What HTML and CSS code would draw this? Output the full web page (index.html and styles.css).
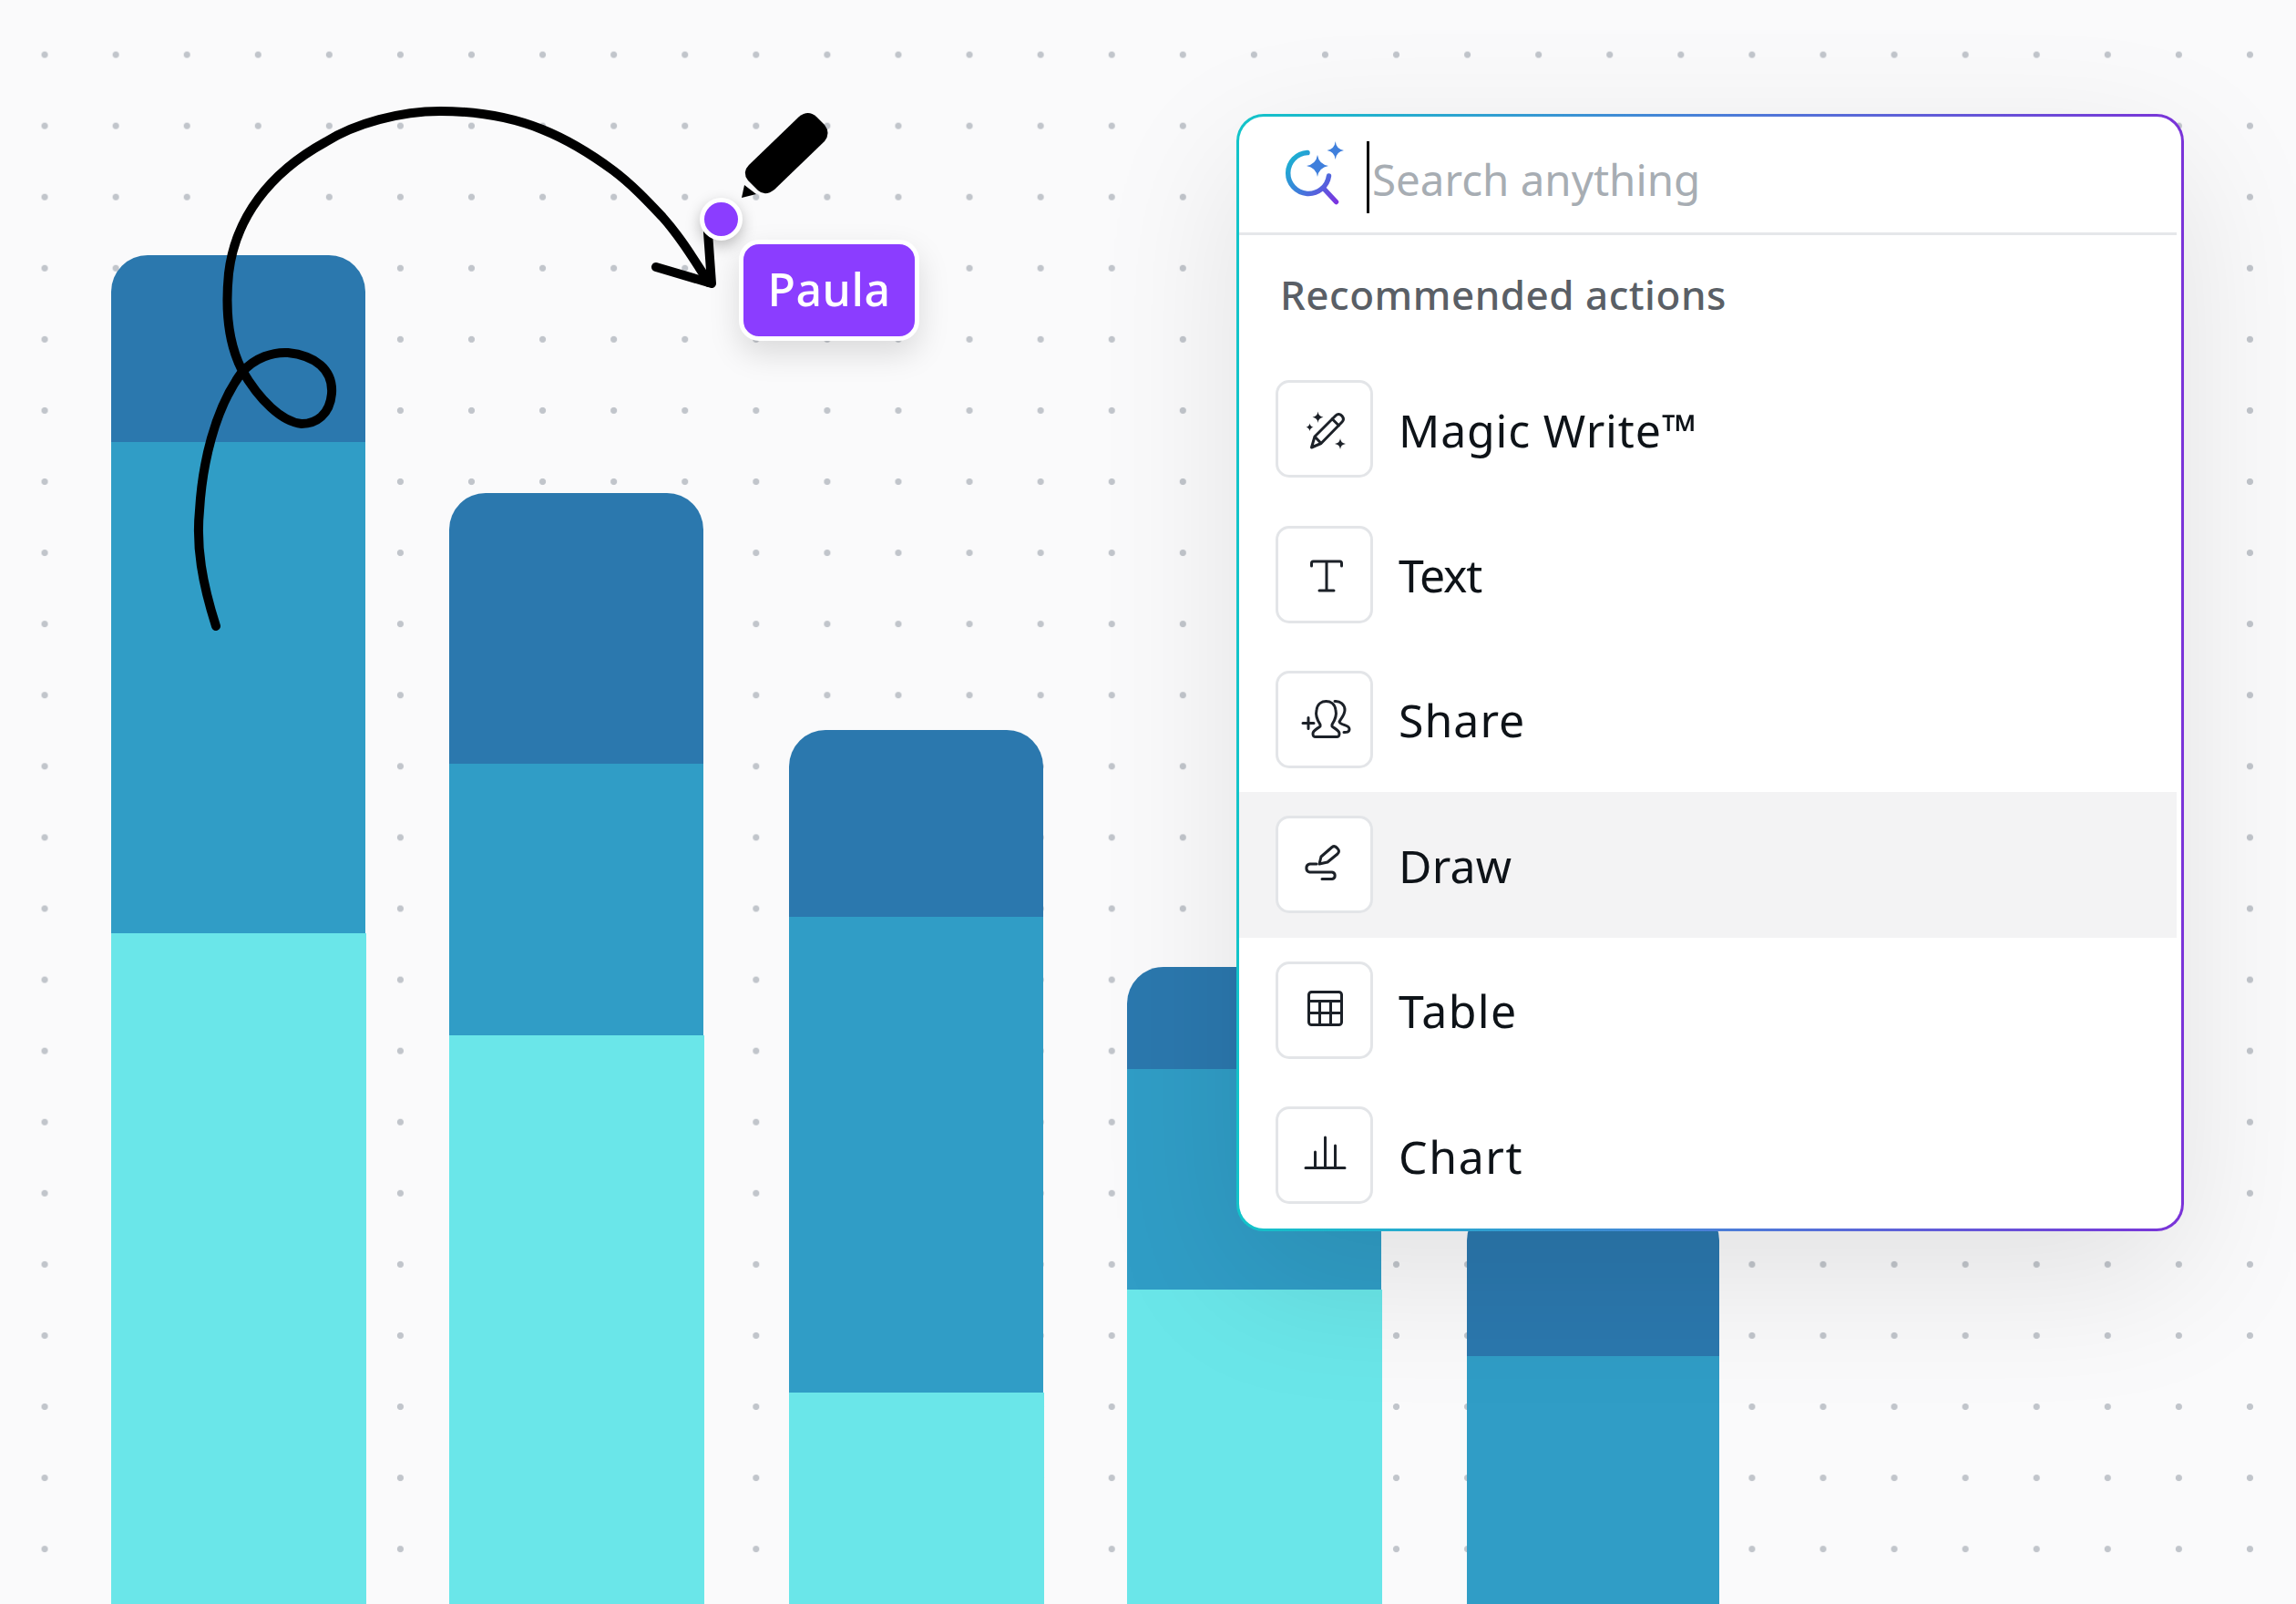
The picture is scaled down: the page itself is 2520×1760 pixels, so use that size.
FILE: index.html
```html
<!DOCTYPE html>
<html lang="en">
<head>
    <meta charset="UTF-8">
    <title>Recommended actions</title>
    <link rel="stylesheet" href="styles.css">
</head>
<body>
    <div class="chart">
        <div class="bar"><div class="seg dark h205"></div><div class="seg mid h539"></div><div class="seg light h736"></div></div>
        <div class="bar"><div class="seg dark h297"></div><div class="seg mid h298"></div><div class="seg light h624"></div></div>
        <div class="bar bar-shift"><div class="seg dark h205b"></div><div class="seg mid h522"></div><div class="seg light h232"></div></div>
        <div class="bar"><div class="seg dark h112"></div><div class="seg mid h242"></div><div class="seg light h345"></div></div>
        <div class="bar bar-shift bar-last"><div class="seg dark h167"></div><div class="seg mid h272"></div></div>
    </div>

    <svg class="scribble" viewBox="0 0 1000 720" width="1000" height="720">
        <path class="scribble-line" d="M237 687 C222 640 215 600 219 560 C222 510 235 450 265 409 C280 392 300 386 316 387 C345 390 366 405 364 432 C362 455 347 465 331 465 C310 463 285 440 265 405 C250 375 247 340 251 300 C258 240 295 190 357 156 C390 135 440 122 483 122 C520 122 560 128 595 142 C625 154 650 170 673 187 C693 202 710 220 727 238 C745 258 760 282 778 310"/>
        <path class="scribble-line" d="M720 293 L781 311 L777 255"/>
        <path class="pen-body" d="M822 181 L877 128 Q887 120 896 128 L905 137 Q912 146 905 155 L850 208 Q840 216 832 209 L821 198 Q814 189 822 181 Z"/>
        <path class="pen-body" d="M817 203 L814 217 L830 213 Z"/>
    </svg>

    <div class="cursor-dot"></div>
    <div class="name-tag">Paula</div>

    <div class="panel">
        <div class="search">
            <svg class="search-icon" viewBox="0 0 70 72" width="70" height="72">
                <defs>
                    <linearGradient id="lens" x1="0" y1="0" x2="1" y2="1">
                        <stop offset="0" stop-color="#16b9d0"/>
                        <stop offset="0.5" stop-color="#3d7edb"/>
                        <stop offset="1" stop-color="#7b35e0"/>
                    </linearGradient>
                </defs>
                <path class="lens-line" stroke="url(#lens)" d="M28 14.5 A22.5 22.5 0 1 0 51.5 40 M46 54 L59.5 68.5"/>
                <path class="spark" d="M39 17 Q40.5 27 51 29 Q40.5 31 39 41 Q37.5 31 27 29 Q37.5 27 39 17 Z"/>
                <path class="spark" d="M58.7 2 Q59.5 10.5 68 12 Q59.5 13.5 58.7 22 Q57.9 13.5 49.5 12 Q57.9 10.5 58.7 2 Z"/>
            </svg>
            <span class="caret"></span>
            <span class="placeholder">Search anything</span>
        </div>

        <h2 class="section-title">Recommended actions</h2>

        <div class="row">
            <div class="icon-box">
                <svg viewBox="0 0 60 60" width="60" height="60">
                    <path d="M15.5 50 L19 38 L42 15 C44 13 47 13 49 15.5 C51 18 51 20 49 22 L26 45.5 Z M38 18.5 L45.5 26 M19 38 L26 45.5"/>
                    <path class="icon-fill" d="M22.5 10.5 Q23 16 28.5 16.7 Q23 17.4 22.5 23 Q22 17.4 16.5 16.7 Q22 16 22.5 10.5 Z M13.5 23.5 Q14 27 17.5 27.7 Q14 28.4 13.5 32 Q13 28.4 9.5 27.7 Q13 27 13.5 23.5 Z M47 40 Q47.5 45.3 53 46 Q47.5 46.7 47 52 Q46.5 46.7 41 46 Q46.5 45.3 47 40 Z"/>
                </svg>
            </div>
            <span class="row-label label-magic">Magic Write™</span>
        </div>
        <div class="row">
            <div class="icon-box">
                <svg viewBox="0 0 60 60" width="60" height="60">
                    <path d="M15.5 21 V18 A2 2 0 0 1 17.5 16 H46.5 A2 2 0 0 1 48.5 18 V21 M32 16 V48 M24 48 H40"/>
                </svg>
            </div>
            <span class="row-label label-text">Text</span>
        </div>
        <div class="row">
            <div class="icon-box">
                <svg viewBox="0 0 60 60" width="60" height="60">
                    <path d="M6 34.5 H18 M12 28.5 V40.5"/>
                    <path d="M25 36 C21 30 20 24 21 20 C22 13 27 10.5 31.5 10.5 C36 10.5 41 13 42 20 C43 24 42 30 38 36 L38 38 C40 40 46 42 46 46 C46 49 45 49.5 43 49.5 H20 C18 49.5 17 49 17 46 C17 42 23 40 25 38 Z"/>
                    <path d="M41 10.5 C47 10 52 14 52 20 C52 26 47 30 46 33 C47 37 57 36 57 41 C57 45 53 44.5 51 44.5"/>
                </svg>
            </div>
            <span class="row-label label-share">Share</span>
        </div>
        <div class="row row-active">
            <div class="icon-box">
                <svg viewBox="0 0 60 60" width="60" height="60">
                    <path d="M24 29 L26 21 L38 10.5 C40 9 42 9.5 44 12 C46 14 46 16 44 18 L33 27 Z"/>
                    <path d="M21 29 H13.5 A4.6 4.6 0 0 0 13.5 38 H38 A3.8 3.8 0 0 1 38 45.5 H27"/>
                </svg>
            </div>
            <span class="row-label label-draw">Draw</span>
        </div>
        <div class="row">
            <div class="icon-box">
                <svg viewBox="0 0 60 60" width="60" height="60">
                    <rect x="12.5" y="10.5" width="36" height="36" rx="3"/>
                    <path d="M12.5 20.5 H48.5 M12.5 33.5 H48.5 M24.5 20.5 V46.5 M36.5 20.5 V46.5"/>
                </svg>
            </div>
            <span class="row-label label-table">Table</span>
        </div>
        <div class="row">
            <div class="icon-box">
                <svg viewBox="0 0 60 60" width="60" height="60">
                    <path d="M9 43.5 H52 M19.5 43.5 V26 M30.5 43.5 V10 M41.5 43.5 V19"/>
                </svg>
            </div>
            <span class="row-label label-chart">Chart</span>
        </div>
    </div>
</body>
</html>
```

FILE: styles.css
```css
html, body {
    margin: 0;
    height: 100%;
}
body {
    width: 2520px;
    height: 1760px;
    overflow: hidden;
    position: relative;
    font-family: "Noto Sans", "Open Sans", sans-serif;
    background-color: #fafafb;
    background-image: radial-gradient(circle at center, #c1c5cb 3.2px, transparent 4px);
    background-size: 78.08px 78.08px;
    background-position: 10px 21px;
}

/* bars run off the bottom of the page */
.chart {
    display: flex;
    align-items: flex-end;
    gap: 91px;
    height: 1760px;
    padding-left: 122px;
    box-sizing: border-box;
}
.bar {
    width: 280px;
    display: flex;
    flex-direction: column;
}
.bar-shift { margin-left: 2px; }
.bar-last { width: 278px; }
.seg { width: calc(100% - 1px); }
.dark {
    background: #2b78ae;
    border-radius: 40px 40px 0 0;
}
.mid { background: #309dc6; }
.light {
    width: 100%;
    background: #6ae6e9;
}
.h205 { height: 205px; }
.h539 { height: 539px; }
.h736 { height: 736px; }
.h297 { height: 297px; }
.h298 { height: 298px; }
.h624 { height: 624px; }
.h205b { height: 205px; }
.h522 { height: 522px; }
.h232 { height: 232px; }
.h112 { height: 112px; }
.h242 { height: 242px; }
.h345 { height: 345px; }
.h167 { height: 167px; }
.h272 { height: 272px; }

.scribble {
    position: absolute;
    left: 0;
    top: 0;
}
.scribble-line {
    fill: none;
    stroke: #000;
    stroke-width: 10;
    stroke-linecap: round;
    stroke-linejoin: round;
}
.pen-body { fill: #000; }

.cursor-dot {
    position: absolute;
    left: 768px;
    top: 217px;
    width: 37px;
    height: 37px;
    background: #8b3dff;
    border: 5px solid #fff;
    border-radius: 50%;
    box-shadow: 0 6px 16px rgba(0, 0, 0, 0.25);
}
.name-tag {
    position: absolute;
    left: 811px;
    top: 263px;
    width: 188px;
    height: 101px;
    border: 5px solid #fff;
    border-radius: 22px;
    background: #8b3dff;
    box-shadow: 0 14px 34px rgba(0, 0, 0, 0.13);
    color: #fff;
    font-size: 50px;
    font-weight: 500;
    letter-spacing: 0.5px;
    line-height: 98px;
    display: flex;
    justify-content: center;
}

.panel {
    position: absolute;
    left: 1357px;
    top: 125px;
    width: 1040px;
    height: 1226px;
    box-sizing: border-box;
    border: 3px solid transparent;
    border-radius: 30px;
    background: linear-gradient(#fff, #fff) padding-box,
                linear-gradient(90deg, #12c4c9 0%, #4a7fd8 50%, #7a33d8 100%) border-box;
    box-shadow: 0 50px 160px rgba(0, 0, 0, 0.1);
}
.search {
    height: 127px;
    margin-right: 5px;
    border-bottom: 3px solid #e5e7ea;
    display: flex;
    align-items: center;
    padding-left: 47px;
}
.search-icon {
    flex: none;
    margin-top: -5px;
}
.caret {
    flex: none;
    width: 3px;
    height: 79px;
    margin-left: 23px;
    margin-right: 3px;
    margin-top: 6px;
    background: #000;
}
.placeholder {
    font-size: 47.5px;
    margin-top: 10px;
    color: #a7adb3;
}
.section-title {
    margin: 0;
    height: 133px;
    box-sizing: border-box;
    padding: 43px 0 0 45px;
    font-size: 44px;
    line-height: 44px;
    font-weight: 500;
    letter-spacing: 0.5px;
    color: #5a5f66;
}
.row {
    height: 159.4px;
    margin-right: 5px;
    display: flex;
    align-items: center;
    padding-left: 40px;
}
.row-active { background: #f3f3f4; }
.icon-box {
    flex: none;
    width: 107px;
    height: 107px;
    box-sizing: border-box;
    border: 3px solid #e3e5e8;
    border-radius: 15px;
    background: #fff;
    display: flex;
    align-items: center;
    justify-content: center;
}
.icon-box svg path,
.icon-box svg rect {
    fill: none;
    stroke: #1c2128;
    stroke-width: 3;
    stroke-linecap: round;
    stroke-linejoin: round;
}
.icon-box svg path.icon-fill {
    fill: #1c2128;
    stroke: none;
}
.row-label {
    margin-left: 28px;
    padding-top: 2px;
    font-size: 50px;
    color: #0e1318;
}
.label-magic { letter-spacing: 0.8px; }
.label-text { letter-spacing: -1.2px; }
.label-share { letter-spacing: 1px; }
.label-draw { letter-spacing: 0.2px; }
.label-table { letter-spacing: 1.4px; }
.label-chart { letter-spacing: 1.6px; }
.lens-line {
    fill: none;
    stroke-width: 5.5;
    stroke-linecap: round;
}
.spark { fill: #3f7fdc; }
```
